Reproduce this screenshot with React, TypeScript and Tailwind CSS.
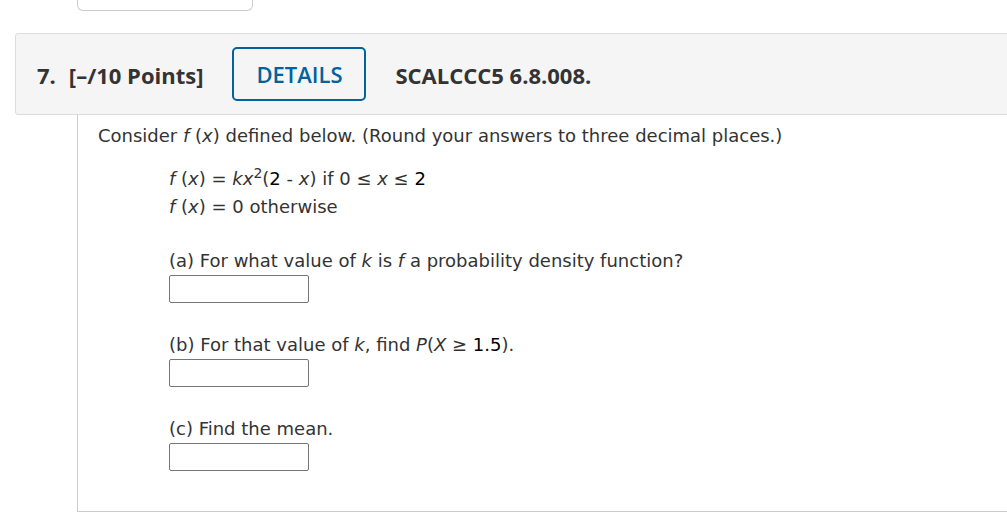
import React from "react";

const body = { fontFamily: '"DejaVu Sans", Verdana, sans-serif' };
const head = { fontFamily: '"Open Sans", "Noto Sans", sans-serif' };

function Answer() {
  return <div className="mt-[2px] h-[28px] w-[140px] rounded-[2px] border border-[#767676] bg-white" />;
}

export default function App() {
  return (
    <div className="h-[515px] w-[1007px] overflow-hidden bg-white">
      <div className="ml-[77px] h-[11px] w-[176px] rounded-b-[6px] border-x border-b border-[#cccccc]" />
      <div
        className="ml-[15px] mt-[22px] flex h-[82px] w-[1010px] items-center rounded-l-[3px] border border-[#dddddd] bg-[#f5f5f5] pl-[21px] text-[22px] font-bold text-[#333333]"
        style={head}
      >
        <span className="mt-[3px]">7.</span>
        <span className="ml-[13px] mt-[3px]">[–/10 Points]</span>
        <div className="ml-[29px] flex h-[54px] w-[134px] items-center justify-center rounded-[5px] border-2 border-[#00639e] pt-[1px] text-[22px] font-semibold text-[#00639e]">
          DETAILS
        </div>
        <span className="ml-[29px] mt-[3px]">SCALCCC5 6.8.008.</span>
      </div>
      <div
        className="ml-[77px] h-[397px] w-[1000px] border-b border-l border-[#cccccc] pl-[20px] pt-[9px] text-[18px] leading-[24px] text-[#333333]"
        style={body}
      >
        <p>
          Consider <i>f</i> (<i>x</i>) defined below. (Round your answers to three decimal places.)
        </p>
        <div className="ml-[71px] mt-[17px] leading-[28px]">
          <div>
            <i>f</i> (<i>x</i>) = <i>kx</i>
            <sup className="text-[14px]">2</sup>(<span className="text-black">2</span> - <i>x</i>) if 0 ≤ <i>x</i> ≤{" "}
            <span className="text-black">2</span>
          </div>
          <div>
            <i>f</i> (<i>x</i>) = 0 otherwise
          </div>
        </div>
        <div className="ml-[71px] mt-[28px]">
          <div>
            (a) For what value of <i>k</i> is <i>f</i> a probability density function?
          </div>
          <Answer />
          <div className="mt-[30px]">
            (b) For that value of <i>k</i>, find <i>P</i>(<i>X</i> ≥ <span className="text-black">1.5</span>).
          </div>
          <Answer />
          <div className="mt-[30px]">(c) Find the mean.</div>
          <Answer />
        </div>
      </div>
    </div>
  );
}
